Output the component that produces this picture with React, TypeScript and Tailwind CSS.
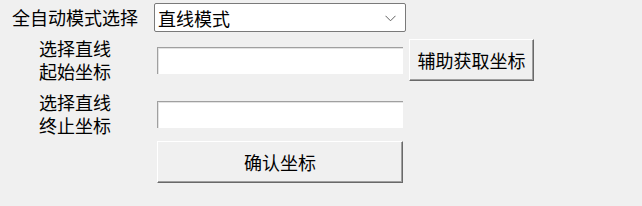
const font = { fontFamily: '"Noto Sans CJK SC", "Noto Sans", sans-serif' }

function Label({ lines }: { lines: string[] }) {
  return (
    <div className="w-[150px] shrink-0 flex flex-col items-center text-[18px] leading-[23px] text-black">
      {lines.map((l) => (
        <span key={l}>{l}</span>
      ))}
    </div>
  )
}

function Entry() {
  return (
    <div className="w-[246px] h-[27px] bg-white border-t border-l border-[#a0a0a0] shadow-[inset_1px_1px_0_#e3e3e3]" />
  )
}

function TkButton({ label, className }: { label: string; className: string }) {
  return (
    <button
      type="button"
      className={
        'h-[42px] bg-[#f0f0f0] border-t border-l border-white border-r border-b border-r-[#696969] border-b-[#696969] shadow-[inset_-1px_-1px_0_#a0a0a0] text-[18px] leading-none text-black ' +
        className
      }
    >
      {label}
    </button>
  )
}

export default function App() {
  return (
    <div className="w-[642px] h-[206px] bg-[#f0f0f0] overflow-hidden" style={font}>
      {/* mode row */}
      <div className="h-[35px] flex items-center">
        <Label lines={['全自动模式选择']} />
        <div className="ml-[4px] w-[252px] h-[29px] bg-white border border-[#7a7a7a] rounded-[2px] flex items-center pl-[3px] pr-[9px]">
          <span className="flex-1 text-[18px] leading-none text-black">直线模式</span>
          <svg width="11" height="7" viewBox="0 0 11 7" className="mt-[1px]">
            <path d="M0.5 0.8 L5.5 5.8 L10.5 0.8" fill="none" stroke="#606060" strokeWidth="1" />
          </svg>
        </div>
      </div>

      {/* start point row */}
      <div className="h-[50px] flex items-center">
        <Label lines={['选择直线', '起始坐标']} />
        <div className="ml-[7px] w-[252px]">
          <Entry />
        </div>
        <TkButton label="辅助获取坐标" className="w-[125px]" />
      </div>

      {/* end point row */}
      <div className="h-[56px] pt-[2px] flex items-center">
        <Label lines={['选择直线', '终止坐标']} />
        <div className="ml-[7px]">
          <Entry />
        </div>
      </div>

      {/* confirm */}
      <div className="flex">
        <div className="w-[157px] shrink-0" />
        <TkButton label="确认坐标" className="w-[246px]" />
      </div>
    </div>
  )
}
